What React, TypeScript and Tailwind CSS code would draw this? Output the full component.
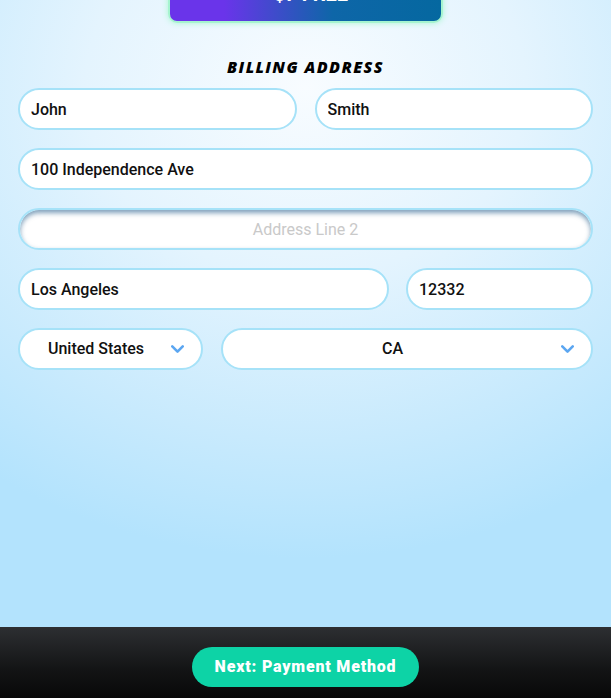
import { ChevronDown } from 'lucide-react';

const inputBase =
  "h-[42px] min-w-0 rounded-full border-2 border-[#a6e2f8] bg-white px-[11px] text-[16px] font-medium text-[#111] outline-none";

const Field = ({ value, className = '' }: { value: string; className?: string }) => (
  <input readOnly value={value} className={`${inputBase} ${className}`} />
);

const Select = ({ value, className = '' }: { value: string; className?: string }) => (
  <div className={`relative ${className}`}>
    <div className={`${inputBase} flex w-full items-center justify-center pr-[40px]`}>
      <span>{value}</span>
    </div>
    <ChevronDown
      className="absolute right-[15px] top-1/2 h-[21px] w-[21px] -translate-y-1/2 text-[#5ba6f1]"
      strokeWidth={3}
    />
  </div>
);

export default function App() {
  return (
    <div
      className="flex h-[698px] w-full flex-col overflow-hidden"
      style={{ fontFamily: 'Roboto, "Liberation Sans", sans-serif' }}
    >
      <main className="flex flex-1 flex-col items-center bg-[radial-gradient(ellipse_90%_75%_at_50%_14%,#f8fcff_0%,#e4f4fe_40%,#c8eafd_75%,#b3e3fd_100%)] px-[18px]">
        {/* promo button, cut off at top */}
        <div className="mt-[-27px] flex h-[50px] w-[275px] items-start justify-center rounded-[9px] border-2 border-[#a6f4cf] bg-[linear-gradient(90deg,#6a34ea_0%,#6a34ea_20%,#0e66a8_60%,#0568a0_100%)] pt-[9px] text-[20px] leading-[20px] font-bold text-white shadow-[0_0_6px_#a8f6d2]">
          +$7 FREE
        </div>

        <h2
          className="mt-[34px] mb-[11px] text-[16px] leading-[20px] font-extrabold italic tracking-[1.4px] text-black"
          style={{ fontFamily: '"Open Sans", "Liberation Sans", sans-serif' }}
        >
          BILLING ADDRESS
        </h2>

        <div className="flex w-full flex-col gap-[18px]">
          <div className="flex gap-[18px]">
            <Field value="John" className="flex-1" />
            <Field value="Smith" className="flex-1" />
          </div>
          <Field value="100 Independence Ave" className="w-full" />
          <input
            readOnly
            placeholder="Address Line 2"
            className={`${inputBase} w-full text-center shadow-[inset_0_3px_5px_rgba(20,80,130,0.55)] placeholder:text-[#c9c9c9] placeholder:font-normal`}
          />
          <div className="flex gap-[17px]">
            <Field value="Los Angeles" className="w-[371px] shrink-0" />
            <Field value="12332" className="flex-1" />
          </div>
          <div className="flex gap-[18px]">
            <Select value="United States" className="w-[185px] shrink-0" />
            <Select value="CA" className="flex-1" />
          </div>
        </div>
      </main>

      <footer className="flex h-[71px] shrink-0 justify-center bg-[linear-gradient(180deg,#2d2f32_0%,#131415_60%,#080808_100%)] pt-[20px]">
        <button className="h-[40px] w-[227px] rounded-full bg-[#0dd3a6] text-[16px] font-black tracking-[0.8px] text-white">
          Next: Payment Method
        </button>
      </footer>
    </div>
  );
}
